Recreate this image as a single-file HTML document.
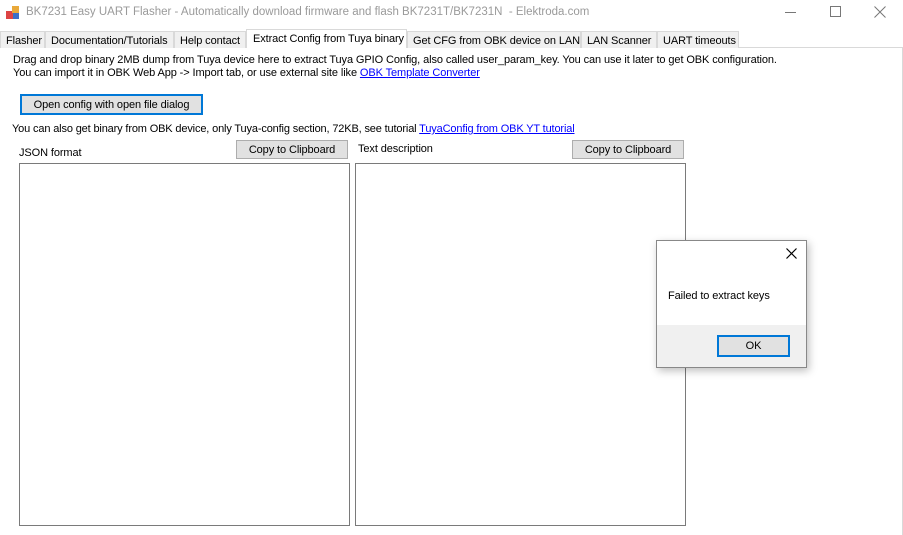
<!DOCTYPE html>
<html><head><style>
*{box-sizing:border-box;margin:0;padding:0}
body{width:903px;height:535px;background:#fff;font-family:"Liberation Sans",sans-serif;font-size:11px;letter-spacing:-0.1px;color:#000;position:relative;overflow:hidden}
.a{position:absolute;white-space:nowrap}
.tab{position:absolute;top:31px;height:17px;border:1px solid #d9d9d9;border-bottom:none;background:#f0f0f0;padding:3px 0 0 5px;white-space:nowrap;overflow:hidden}
.btn{position:absolute;background:#e1e1e1;border:1px solid #adadad;text-align:center;white-space:nowrap}
.tb{position:absolute;border:1px solid #7a7a7a;background:#fff}
a{color:#0000ff;text-decoration:underline}
</style></head><body>
<svg class="a" style="left:6px;top:6px" width="14" height="14"><rect x="0" y="5" width="7" height="8" fill="#d44"/><rect x="6" y="0" width="7" height="7" fill="#e9a93a"/><rect x="7" y="7" width="6" height="6" fill="#3a6fc7"/></svg>
<div class="a" style="left:26px;top:6px;font-size:11.5px;letter-spacing:0;color:#9a9a9a">BK7231 Easy UART Flasher - Automatically download firmware and flash BK7231T/BK7231N&nbsp; - Elektroda.com</div>
<div class="a" style="left:785px;top:12px;width:11px;height:1px;background:#777"></div>
<div class="a" style="left:830px;top:6px;width:11px;height:11px;border:1px solid #777"></div>
<svg class="a" style="left:874px;top:6px" width="12" height="12"><path d="M0.5 0.5L11.5 11.5M11.5 0.5L0.5 11.5" stroke="#777" stroke-width="1"/></svg>
<div class="a" style="left:0;top:47px;width:903px;height:488px;border-top:1px solid #d9d9d9;border-right:1px solid #d9d9d9"></div>
<div class="tab" style="left:0;width:45px">Flasher</div>
<div class="tab" style="left:45px;width:129px">Documentation/Tutorials</div>
<div class="tab" style="left:174px;width:72px">Help contact</div>
<div class="tab" style="left:246px;top:29px;height:19px;width:161px;background:#fff;padding-left:6px">Extract Config from Tuya binary</div>
<div class="tab" style="left:407px;width:174px">Get CFG from OBK device on LAN</div>
<div class="tab" style="left:581px;width:76px">LAN Scanner</div>
<div class="tab" style="left:657px;width:82px">UART timeouts</div>
<div class="a" style="left:13px;top:54px">Drag and drop binary 2MB dump from Tuya device here to extract Tuya GPIO Config, also called user_param_key. You can use it later to get OBK configuration.</div>
<div class="a" style="left:13px;top:67px">You can import it in OBK Web App -&gt; Import tab, or use external site like <a>OBK Template Converter</a></div>
<div class="btn" style="left:20px;top:94px;width:183px;height:21px;border:2px solid #0078d7;padding-top:3px">Open config with open file dialog</div>
<div class="a" style="left:12px;top:123px;letter-spacing:-0.15px">You can also get binary from OBK device, only Tuya-config section, 72KB, see tutorial <a>TuyaConfig from OBK YT tutorial</a></div>
<div class="a" style="left:19px;top:147px">JSON format</div>
<div class="btn" style="left:236px;top:140px;width:112px;height:19px;padding-top:3px">Copy to Clipboard</div>
<div class="a" style="left:358px;top:143px">Text description</div>
<div class="btn" style="left:572px;top:140px;width:112px;height:19px;padding-top:3px">Copy to Clipboard</div>
<div class="tb" style="left:19px;top:163px;width:331px;height:363px"></div>
<div class="tb" style="left:355px;top:163px;width:331px;height:363px"></div>
<div class="a" style="left:656px;top:240px;width:151px;height:128px;border:1px solid #888;background:#fff;box-shadow:2px 3px 8px rgba(0,0,0,.25)">
<svg class="a" style="left:129px;top:7px" width="12" height="12"><path d="M0.5 0.5L10.5 10.5M10.5 0.5L0.5 10.5" stroke="#000" stroke-width="1.2"/></svg>
<div class="a" style="left:11px;top:49px">Failed to extract keys</div>
<div class="a" style="left:0;top:84px;width:149px;height:42px;background:#f0f0f0"></div>
<div class="btn" style="left:60px;top:94px;width:73px;height:22px;border:2px solid #0078d7;padding-top:3px">OK</div>
</div>
</body></html>
